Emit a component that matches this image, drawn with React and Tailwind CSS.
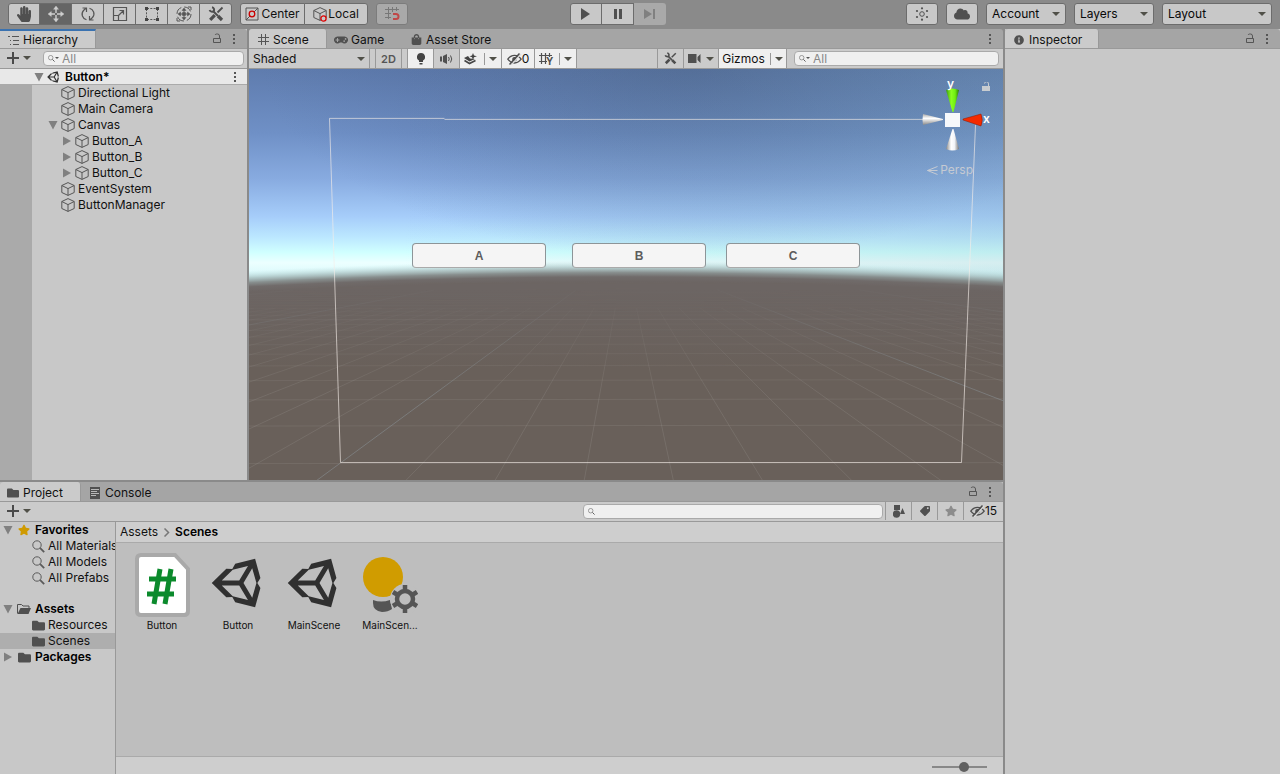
import { useState } from 'react'
import { FaHandPaper, FaFolder, FaStar, FaTag, FaGamepad, FaCloud, FaInfoCircle, FaShoppingBag } from 'react-icons/fa'

// --- SMALL ICONS ---

function Triangle({ open = false, className = '' }) {
  return (
    <svg viewBox="0 0 10 10" className={`w-[10px] h-[10px] shrink-0 fill-[#808080] ${className}`}>
      {open ? <path d="M0.5 1h9L5 9.5z" /> : <path d="M1 0.5v9L9 5z" />}
    </svg>
  )
}

function Caret() {
  return (
    <svg viewBox="0 0 8 4" className="w-2 h-1 shrink-0 fill-[#505048] pointer-events-none">
      <path d="M0 0h8L4 4z" />
    </svg>
  )
}

function Dots() {
  return (
    <svg viewBox="0 0 3 10" className="w-[3px] h-[10px] fill-[#555]">
      <path d="M0 0h2v2H0zM0 4h2v2H0zM0 8h2v2H0z" />
    </svg>
  )
}

function Lock() {
  return (
    <svg viewBox="0 0 10 11" className="w-[10px] h-[11px] fill-none stroke-[#555]">
      <path d="M1.5 5.5h7v4h-7zM7.5 5V3a2 2 0 0 0-2-2h-1a2 2 0 0 0-1.5 1" />
    </svg>
  )
}

function Plus() {
  return (
    <svg viewBox="0 0 12 12" className="w-3 h-3 stroke-[#4a4a4a]" strokeWidth="2">
      <path d="M6 0v12M0 6h12" />
    </svg>
  )
}

function Cube({ className = '' }) {
  return (
    <svg viewBox="0 0 14 14" className={`w-[14px] h-[14px] shrink-0 fill-none stroke-[#555] ${className}`} strokeLinejoin="round">
      <path d="M7 0.6l6.2 2.9v7L7 13.4l-6.2-2.9v-7zM0.8 3.5L7 6.6l6.2-3.1M7 6.6v6.8" />
    </svg>
  )
}

function UnityLogo({ className }) {
  return (
    <svg viewBox="8 8 496 496" className={`shrink-0 fill-[#303030] ${className}`}>
      <path d="M498.11 206.4L445.31 14.72 248.2 66.08 219 116.14l-59.2-.43L15.54 256 159.82 396.32l59.17-.43 29.24 50 197.08 51.36 52.8-191.62-30-49.63zM223.77 124.2L374.55 86.51 288 232.33H114.87zm0 263.63L114.87 279.71H288l86.55 145.81zm193 14L330.17 256l86.58-145.84L458.56 256z" />
    </svg>
  )
}

function Magnifier({ className = 'w-[13px] h-[13px]' }) {
  return (
    <svg viewBox="0 0 13 13" className={`shrink-0 fill-none stroke-[#5a5a5a] ${className}`}>
      <circle cx="5" cy="5" r="4.2" />
      <path d="M8.2 8.2l4 4" strokeWidth="1.8" />
    </svg>
  )
}

function Tools({ className = 'w-4 h-4' }) {
  return (
    <svg viewBox="0 0 16 16" className={`fill-none stroke-[#4d4d4d] ${className}`}>
      <path d="M5 5l5 5" strokeWidth="2" />
      <path d="M10 10l4 4" strokeWidth="3.2" />
      <path d="M1.6 4A2.6 2.6 0 0 0 5.8 5 2.6 2.6 0 0 0 4 1.2" strokeWidth="2" />
      <path d="M14.5 1.5l-5 5" strokeWidth="1.8" />
      <path d="M6.8 9.2l-4.6 4.6" strokeWidth="3.2" />
    </svg>
  )
}

function EyeOff() {
  return (
    <svg viewBox="0 0 15 12" className="w-[15px] h-3 shrink-0 fill-none stroke-[#4d4d4d]" strokeWidth="1.3">
      <path d="M0.8 6.2C3 3 5 2.4 7.5 2.4s4.5.8 6.7 3.8C12 9 10 10 7.5 10S3 9 .8 6.2z" />
      <circle cx="7.5" cy="6.2" r="1.6" fill="#4d4d4d" />
      <path d="M14 1L4 12" stroke="#dcdcdc" />
      <path d="M12.5 0.5l-10 11" strokeWidth="1.5" />
    </svg>
  )
}

function Hash() {
  return (
    <svg viewBox="0 0 11 11" className="w-[11px] h-[11px] stroke-[#555]">
      <path d="M3.5 0v11M7.5 0v11M0 3.5h11M0 7.5h11" />
    </svg>
  )
}

function GridAxis() {
  return (
    <svg viewBox="0 0 16 18" className="w-4 h-[18px] shrink-0">
      <path d="M2.5 3v11M6.5 3v11M10.5 3v4M0 5.5h13M0 11.5h8" stroke="#505050" strokeWidth="1.2" />
      <text x="7" y="15" fontSize="10" fontWeight="700" fill="#505050">Y</text>
    </svg>
  )
}

function HierarchyIcon() {
  return (
    <svg viewBox="0 0 11 10" className="w-[11px] h-[10px] stroke-[#555]">
      <path d="M0 1.5h2M4 1.5h7M2 5.5h1M5 5.5h6M2 9.5h1M5 9.5h6" />
    </svg>
  )
}

function FolderOpen() {
  return (
    <svg viewBox="0 0 14 12" className="w-[14px] h-3 shrink-0">
      <path d="M0.5 10.5v-9h4L6 3h6v2" fill="none" stroke="#505050" />
      <path d="M3.5 5H14l-2.5 6h-11z" fill="#505050" />
    </svg>
  )
}

function ConsoleIcon() {
  return (
    <svg viewBox="0 0 10 12" className="w-[10px] h-3">
      <path d="M0 0h10v12H0z" fill="#505050" />
      <path d="M1 2.5h8M1 4.5h6M1 6.5h8M1 8.5h5" stroke="#b8b8b8" />
    </svg>
  )
}

const TOOL_ICONS = {
  Move: (
    <svg viewBox="0 0 16 16" className="w-4 h-4 fill-[#d0d0d0] stroke-[#d0d0d0]">
      <path d="M8 3v4M8 9v4M3 8h4M9 8h4" strokeWidth="1.4" />
      <path d="M8 0l2.5 3.3h-5zM8 16l2.5-3.3h-5zM0 8l3.3-2.5v5zM16 8l-3.3-2.5v5z" strokeWidth="0.4" />
    </svg>
  ),
  Rotate: (
    <svg viewBox="0 0 16 16" className="w-4 h-4 fill-none stroke-[#555]" strokeWidth="1.2">
      <path d="M6.5 13.8C2.5 12.5.5 8 3.5 4.5L6.2 2M2.5 2h4v4M9.5 2.2c4 1.3 6 5.8 3 9.3L9.8 14M13.5 14h-4v-4" />
    </svg>
  ),
  Scale: (
    <svg viewBox="0 0 16 16" className="w-4 h-4 fill-none stroke-[#555]" strokeWidth="1.2">
      <path d="M1.5 1.5h13v13h-13zM1.5 9.5h5v5M6.5 9.5l5-5M7.5 4.5h4v4" />
    </svg>
  ),
  Rect: (
    <svg viewBox="0 0 16 16" className="w-4 h-4 fill-[#444]">
      <path d="M3 2.5h10M3 13.5h10M2.5 3v10M13.5 3v10" stroke="#555" strokeDasharray="2 1.3" />
      <path d="M1 1h3v3H1zM12 1h3v3h-3zM1 12h3v3H1zM12 12h3v3h-3z" />
    </svg>
  ),
  Transform: (
    <svg viewBox="0 0 16 16" className="w-4 h-4 fill-none stroke-[#555]">
      <circle cx="8" cy="8" r="7" strokeDasharray="8 3" />
      <path d="M8 3v10M3 8h10M12 1h3v3M1 12v3h3" />
      <path d="M8 2l2 2.5H6zM8 14l2-2.5H6zM2 8l2.5-2v4zM14 8l-2.5-2v4zM6.5 6.5h3v3h-3z" fill="#555" strokeWidth="0.5" />
    </svg>
  ),
}

// --- SHARED CONTROLS ---

function TopButton({ label, active, className = 'w-8', children, ...rest }) {
  return (
    <button
      aria-label={label}
      className={`h-[22px] flex items-center justify-center border border-[#6c6c6c] -ml-px first:ml-0 first:rounded-l-[3px] last:rounded-r-[3px] ${active ? 'bg-[#656565]' : 'bg-[#c8c8c8]'} ${className}`}
      {...rest}
    >
      {children}
    </button>
  )
}

function TopSelect({ label, className }) {
  return (
    <label className={`flex items-center h-[22px] pr-[5px] rounded-[3px] border border-[#6c6c6c] bg-[#c8c8c8] ${className}`}>
      <select aria-label={label} className="appearance-none flex-1 min-w-0 pl-[5px] outline-none text-[#090909]">
        <option>{label}</option>
      </select>
      <Caret />
    </label>
  )
}

function Tab({ active, focused, icon, className, children }) {
  return (
    <button
      className={`h-full flex items-center gap-1 text-[#111] ${active ? 'bg-[#cbcbcb] border-r border-[#999]' : ''} ${focused ? 'border-t-2 border-t-[#3a72b0]' : 'pt-[2px] rounded-t-[3px]'} ${className}`}
    >
      <span className="w-3 flex justify-center shrink-0">{icon}</span>
      {children}
    </button>
  )
}

function TabBar({ lock = true, children }) {
  return (
    <div className="h-5 shrink-0 flex items-center bg-[#a5a5a5] border-b border-[#999] rounded-t-[3px] pr-[11px]">
      {children}
      <div className="flex-1" />
      {lock && <button aria-label="Lock" className="mr-[11px]"><Lock /></button>}
      <button aria-label="Panel menu"><Dots /></button>
    </div>
  )
}

function SearchField({ label, placeholder, caret, className }) {
  return (
    <label className={`h-[15px] flex items-center px-1 rounded-[4px] border border-[#aaa] bg-[#f0f0f0] ${className}`}>
      <Magnifier className="w-[7px] h-[7px]" />
      {caret && <svg viewBox="0 0 4 3" className="w-1 h-[3px] fill-[#555]"><path d="M0 0h4L2 2z" /></svg>}
      <input aria-label={label} placeholder={placeholder} className="flex-1 min-w-0 ml-[3px] text-[12px] leading-[13px] outline-none placeholder:text-[#888]" />
    </label>
  )
}

function BarButton({ label, on, className, children }) {
  return (
    <button aria-label={label} className={`h-full flex items-center justify-center border-r border-[#999] shrink-0 ${on ? 'bg-[#efefef]' : ''} ${className}`}>
      {children}
    </button>
  )
}

function SplitCaret() {
  return (
    <span className="flex items-center gap-1">
      <i className="w-px h-3 bg-[#999]" />
      <Caret />
    </span>
  )
}

// --- TOP TOOLBAR ---

function TopToolbar() {
  const [tool, setTool] = useState('Move')
  return (
    <header className="h-[29px] shrink-0 flex items-center px-2 pb-px">
      <div className="flex">
        <TopButton label="Hand" active={tool === 'Hand'} onClick={() => setTool('Hand')}>
          <FaHandPaper className="w-4 h-4 text-[#505050]" />
        </TopButton>
        {Object.keys(TOOL_ICONS).map((name) => (
          <TopButton key={name} label={name} active={tool === name} className="w-[33px]" onClick={() => setTool(name)}>
            {TOOL_ICONS[name]}
          </TopButton>
        ))}
        <TopButton label="Custom tools" className="w-[33px]"><Tools /></TopButton>
      </div>

      <div className="flex ml-2">
        <TopButton className="w-[65px]">
          <svg viewBox="0 0 14 14" className="w-[14px] h-[14px] mr-[2px] shrink-0 fill-none">
            <path d="M1 1h12v12H1zM1 13L13 1" stroke="#555" />
            <circle cx="7" cy="7" r="2.8" fill="#c8c8c8" stroke="#c00" strokeWidth="1.3" />
          </svg>
          Center
        </TopButton>
        <TopButton className="w-16">
          <span className="relative mr-px">
            <Cube />
            <svg viewBox="0 0 7 7" className="absolute right-0 -bottom-px w-[7px] h-[7px]">
              <circle cx="3.5" cy="3.5" r="2.6" fill="#c8c8c8" stroke="#d00" strokeWidth="1.3" />
            </svg>
          </span>
          Local
        </TopButton>
      </div>

      <button aria-label="Grid snapping" disabled className="ml-2 w-8 h-[22px] flex items-center justify-center rounded-[3px] border border-[#7c7c7c] bg-[#a9a9a9]">
        <svg viewBox="0 0 15 14" className="w-[15px] h-[14px] fill-none">
          <path d="M3.5 0v12M7.5 0v5M11.5 0v4M0 2.5h14M0 6.5h6M0 10.5h6" stroke="#777" />
          <path d="M8 7h3a2.5 2.5 0 0 1 0 5H8" stroke="#c04848" strokeWidth="2" />
        </svg>
      </button>

      <div className="flex-[162]" />
      <div className="flex">
        <TopButton label="Play" className="w-8"><svg viewBox="0 0 9 12" className="w-[9px] h-3 fill-[#505050]"><path d="M0 0l9 6-9 6z" /></svg></TopButton>
        <TopButton label="Pause" className="w-[33px]"><svg viewBox="0 0 9 10" className="w-[9px] h-[10px] fill-[#505050]"><path d="M1 0h3v10H1zM6 0h3v10H6z" /></svg></TopButton>
        <button aria-label="Step" disabled className="w-8 h-[22px] flex items-center justify-center bg-[#a9a9a9] rounded-r-[3px]">
          <svg viewBox="0 0 11 10" className="w-[11px] h-[10px] fill-[#808080]"><path d="M0 0l8 5-8 5zM9 0h2v10H9z" /></svg>
        </button>
      </div>
      <div className="flex-[241]" />

      <div className="flex gap-2">
        <div>
          <TopButton label="Services">
            <svg viewBox="0 0 14 14" className="w-[14px] h-[14px] fill-[#505050]">
              <circle cx="7" cy="7" r="2.3" fill="none" stroke="#505050" />
              <circle cx="7" cy="1.3" r="1.1" />
              <circle cx="7" cy="12.7" r="1.1" />
              <circle cx="2" cy="4" r="1.1" />
              <circle cx="12" cy="4" r="1.1" />
              <circle cx="2" cy="10" r="1.1" />
              <circle cx="12" cy="10" r="1.1" />
            </svg>
          </TopButton>
        </div>
        <div><TopButton label="Cloud"><FaCloud className="w-4 h-4 text-[#505050]" /></TopButton></div>
        <TopSelect label="Account" className="w-20" />
        <TopSelect label="Layers" className="w-20" />
        <TopSelect label="Layout" className="w-[110px]" />
      </div>
    </header>
  )
}

// --- HIERARCHY ---

const NODES = [
  { name: 'Directional Light', depth: 0 },
  { name: 'Main Camera', depth: 0 },
  { name: 'Canvas', depth: 0, fold: 'open' },
  { name: 'Button_A', depth: 1, fold: 'closed' },
  { name: 'Button_B', depth: 1, fold: 'closed' },
  { name: 'Button_C', depth: 1, fold: 'closed' },
  { name: 'EventSystem', depth: 0 },
  { name: 'ButtonManager', depth: 0 },
]

function Hierarchy() {
  return (
    <section className="w-[247px] shrink-0 flex flex-col bg-[#c8c8c8]">
      <TabBar>
        <Tab active focused icon={<HierarchyIcon />} className="w-24 pl-[7px]">Hierarchy</Tab>
      </TabBar>
      <div className="h-5 shrink-0 flex items-center bg-[#cbcbcb] border-b border-[#999] pl-[7px] pr-[3px] pb-px">
        <button aria-label="Create object" className="shrink-0 flex items-center gap-1"><Plus /><Caret /></button>
        <SearchField label="Search hierarchy" placeholder="All" caret className="ml-3 flex-1 min-w-0" />
      </div>
      <div className="h-4 shrink-0 flex items-center bg-[#e8e8e8] border-b border-[#aaa] pl-[34px] pr-[10px]">
        <Triangle open />
        <UnityLogo className="w-3 h-3 ml-[3px] mr-[6px]" />
        <span className="font-semibold text-black flex-1">Button*</span>
        <button aria-label="Scene menu"><Dots /></button>
      </div>
      <div className="flex-1 flex">
        <div className="w-8 bg-[#aaa]" />
        <ul>
          {NODES.map((n) => (
            <li key={n.name} className={`h-4 flex items-center ${n.depth ? 'pl-[30px]' : 'pl-4'}`}>
              <span className="w-[13px]">{n.fold && <Triangle open={n.fold === 'open'} />}</span>
              <Cube className="mr-[3px]" />
              {n.name}
            </li>
          ))}
        </ul>
      </div>
    </section>
  )
}

// --- SCENE VIEW ---

// floor grid, one major line in every ten
const VP = { x: 376, y: 184 }
const rays = Array.from({ length: 61 }, (_, i) => i - 25)
const rungs = Array.from({ length: 36 }, (_, k) => ({ k, y: VP.y + 1 / (0.00476 + 0.00104 * k) }))

function SceneBackdrop() {
  return (
    <svg viewBox="0 -1 754 412" preserveAspectRatio="none" className="absolute inset-0 w-full h-full">
      <defs>
        <linearGradient id="sky" gradientUnits="userSpaceOnUse" x1="0" y1="0" x2="0" y2="210">
          <stop offset="0" stopColor="#5f7cae" />
          <stop offset="0.3" stopColor="#6f90c6" />
          <stop offset="0.52" stopColor="#88abe0" />
          <stop offset="0.7" stopColor="#a6cdfa" />
          <stop offset="0.8" stopColor="#bce8ff" />
          <stop offset="0.87" stopColor="#d0ffff" />
          <stop offset="0.92" stopColor="#ecffff" />
          <stop offset="1" stopColor="#d4f8fa" />
        </linearGradient>
        <radialGradient id="dusk" gradientUnits="userSpaceOnUse" cx="0" cy="0" r="1" gradientTransform="translate(440 -10) scale(430 200)">
          <stop offset="0" stopColor="#40537a" stopOpacity="0.5" />
          <stop offset="1" stopColor="#4a6596" stopOpacity="0" />
        </radialGradient>
        <linearGradient id="shade" x1="0" y1="0" x2="1" y2="0">
          <stop offset="0.2" stopColor="#7ca8b4" stopOpacity="0" />
          <stop offset="1" stopColor="#7ca8b4" stopOpacity="0.2" />
        </linearGradient>
        <radialGradient id="ground" gradientUnits="userSpaceOnUse" cx="377" cy="7291" r="7100">
          <stop offset="0.9970" stopColor="#6c6563" />
          <stop offset="0.9977" stopColor="#706b6a" />
          <stop offset="0.9983" stopColor="#7f8382" stopOpacity="0.9" />
          <stop offset="0.9990" stopColor="#a0b4b4" stopOpacity="0.65" />
          <stop offset="1" stopColor="#c0e4e4" stopOpacity="0" />
        </radialGradient>
        <linearGradient id="soil" gradientUnits="userSpaceOnUse" x1="0" y1="220" x2="0" y2="300">
          <stop offset="0" stopColor="#69605a" stopOpacity="0" />
          <stop offset="1" stopColor="#69605a" />
        </linearGradient>
        <linearGradient id="haze" gradientUnits="userSpaceOnUse" x1="0" y1="218" x2="0" y2="330">
          <stop offset="0" stopColor="#fff" stopOpacity="0.05" />
          <stop offset="1" stopColor="#fff" />
        </linearGradient>
        <mask id="fade" maskUnits="userSpaceOnUse" x="0" y="184" width="754" height="228">
          <rect y="184" width="754" height="228" fill="url(#haze)" />
        </mask>
      </defs>
      <rect y="-1" width="754" height="413" fill="url(#sky)" />
      <rect y="-1" width="754" height="210" fill="url(#dusk)" />
      <rect y="-1" width="754" height="226" fill="url(#shade)" />
      <rect y="180" width="754" height="232" fill="url(#ground)" />
      <rect y="220" width="754" height="192" fill="url(#soil)" />

      <g mask="url(#fade)" stroke="#a09c98" strokeWidth="0.8">
        {rays.map((i) => {
          const endX = 70 + i * 88.5
          const major = i % 10 === 0
          const from = major ? 0.16 : 0.24
          return (
            <line
              key={i}
              x1={VP.x + (endX - VP.x) * from}
              y1={VP.y + 228 * from}
              x2={endX + (endX - VP.x) * 0.01}
              y2="412"
              stroke={major ? '#8f9aa0' : undefined}
              strokeOpacity={major ? 0.6 : 0.3}
            />
          )
        })}
        {rungs.map(({ k, y }) => (
          <line key={k} x1="0" y1={y + 0.5} x2="754" y2={y - 0.5} strokeOpacity={k === 10 ? 0.5 : 0.25} />
        ))}
      </g>

      <path d="M80.5 48.5h115M195.5 49.5H675M726.5 55L712.5 393.5h-621L80.5 48.5" fill="none" stroke="#f4ede8" strokeOpacity="0.65" shapeRendering="crispEdges" />
    </svg>
  )
}

function OrientationGizmo() {
  return (
    <svg viewBox="0 0 72 80" className="w-[72px] h-20" aria-label="Orientation gizmo">
      <defs>
        <linearGradient id="coneV" x1="0" y1="0" x2="1" y2="0">
          <stop offset="0" stopColor="#888" />
          <stop offset="0.4" stopColor="#fff" />
          <stop offset="0.65" stopColor="#f2f4f8" />
          <stop offset="1" stopColor="#777" />
        </linearGradient>
        <linearGradient id="coneH" x1="0" y1="0" x2="0" y2="1">
          <stop offset="0" stopColor="#aaa" />
          <stop offset="0.4" stopColor="#fff" />
          <stop offset="1" stopColor="#888" />
        </linearGradient>
        <linearGradient id="coneG" x1="0" y1="0" x2="1" y2="0">
          <stop offset="0" stopColor="#3a9a10" />
          <stop offset="0.4" stopColor="#8bff20" />
          <stop offset="0.7" stopColor="#70f010" />
          <stop offset="1" stopColor="#2c7a08" />
        </linearGradient>
      </defs>
      <path d="M24 14q6.5-3 13 0L31.5 36h-1z" fill="url(#coneG)" />
      <path d="M1 38q-1 6 0 11L21 44v-1z" fill="url(#coneH)" />
      <path d="M59 38q2.5 6 0 12L41 44v-1z" fill="#f42a00" stroke="#8a1800" strokeWidth="0.5" />
      <path d="M24 73q6.5 3 13 0L31.5 53h-1z" fill="url(#coneV)" />
      <path d="M23 37h15v14H23z" fill="#f6f8fb" />
      <text x="25" y="12" fontSize="12" fontWeight="600" fill="#fff">y</text>
      <text x="61" y="47" fontSize="12" fontWeight="600" fill="#fff">x</text>
    </svg>
  )
}

function CanvasButton({ className, children }) {
  return (
    <button className={`absolute top-[174px] w-[134px] h-[25px] rounded-[4px] border border-[#8d9598] border-b-[#aaa] bg-[#f5f5f5] font-['Liberation_Sans',sans-serif] text-[12px] font-bold text-[#5c5c5c] ${className}`}>
      {children}
    </button>
  )
}

function SceneToolbar() {
  return (
    <div className="h-5 shrink-0 flex items-center bg-[#cbcbcb] border-b border-[#999]">
      <label className="h-full w-[121px] flex items-center px-1 border-r border-[#999]">
        <select aria-label="Draw mode" className="appearance-none flex-1 min-w-0 outline-none"><option>Shaded</option></select>
        <Caret />
      </label>
      <span className="h-full w-[6px] border-r border-[#999]" />
      <BarButton className="w-[26px] text-[11px] font-semibold text-[#555]">2D</BarButton>
      <span className="h-full w-[6px] border-r border-[#999]" />
      <BarButton label="Lighting" on className="w-[26px]">
        <svg viewBox="0 0 8 12" className="w-2 h-3 fill-[#444]"><path d="M4 0a4 4 0 0 0-2 7.5V9h4V7.5A4 4 0 0 0 4 0zM2.5 10h3v1.5h-3z" /></svg>
      </BarButton>
      <BarButton label="Audio" className="w-[26px]">
        <svg viewBox="0 0 13 10" className="w-[13px] h-[10px] fill-[#505050]">
          <path d="M0 2.5h2v5H0zM3 2l4-2v10L3 8z" />
          <path d="M8.5 3q1.5 2 0 4M10.5 1.5q2.5 3.5 0 7" fill="none" stroke="#505050" />
        </svg>
      </BarButton>
      <BarButton label="Effects" on className="w-[42px] gap-[7px]">
        <svg viewBox="0 0 13 12" className="w-[13px] h-3 fill-[#444]">
          <path d="M0 5l4-2 2 2.5 5 .5-5.5 2.5z" />
          <path d="M0.5 7.5l5 3 6-3" fill="none" stroke="#444" strokeWidth="1.6" />
          <path d="M9 0l1 2.5 3 .8-3 .9L9 7 8 4.2l-2.5-.9L8 2.5z" />
        </svg>
        <SplitCaret />
      </BarButton>
      <BarButton label="Hidden objects" on className="w-[33px]"><EyeOff /><span>0</span></BarButton>
      <BarButton label="Grid" on className="w-[42px] gap-1"><GridAxis /><SplitCaret /></BarButton>
      <div className="flex-1 h-full border-r border-[#999]" />
      <BarButton label="Component tools" className="w-[26px]"><Tools className="w-[13px] h-[13px]" /></BarButton>
      <BarButton label="Scene camera" className="w-[35px] gap-[5px]">
        <svg viewBox="0 0 13 9" className="w-[13px] h-[9px] fill-[#505050]"><path d="M0 0h8.5v9H0zM9.5 3l3-3v9l-3-3z" /></svg>
        <Caret />
      </BarButton>
      <BarButton on className="w-[68px] gap-[5px]">Gizmos<SplitCaret /></BarButton>
      <SearchField label="Search scene" placeholder="All" caret className="w-[205px] ml-[7px] mr-1" />
    </div>
  )
}

function SceneView() {
  return (
    <section className="flex-1 min-w-0 flex flex-col">
      <TabBar lock={false}>
        <Tab active icon={<Hash />} className="w-[78px] pl-2">Scene</Tab>
        <Tab icon={<FaGamepad className="w-[14px] h-[14px] shrink-0 text-[#505050]" />} className="w-[77px] pl-2">Game</Tab>
        <Tab icon={<FaShoppingBag className="w-[11px] h-[11px] text-[#505050]" />} className="pl-[6px]">Asset Store</Tab>
      </TabBar>
      <SceneToolbar />
      <div className="flex-1 relative overflow-hidden">
        <SceneBackdrop />
        <CanvasButton className="left-[163px]">A</CanvasButton>
        <CanvasButton className="left-[323px]">B</CanvasButton>
        <CanvasButton className="left-[477px]">C</CanvasButton>
        <div className="absolute right-[9px] top-[7px]"><OrientationGizmo /></div>
        <svg viewBox="0 0 8 9" className="absolute right-[13px] top-[13px] w-2 h-[9px]">
          <path d="M0 4h8v5H0z" fill="#c8ccd0" />
          <path d="M6.5 4V2a2 2 0 0 0-4-.5" fill="none" stroke="#c8ccd0" />
        </svg>
        <button className="absolute right-[30px] top-[93px] flex items-center gap-[2px] text-[#c5cad2]">
          <svg viewBox="0 0 11 9" className="w-[11px] h-[9px] fill-none stroke-[#c5cad2]"><path d="M10.5 0.5l-10 4 10 4M0.5 4.5h10" /></svg>
          Persp
        </button>
      </div>
    </section>
  )
}

// --- PROJECT ---

function TreeRow({ depth = 0, open, icon, bold, selected, children }) {
  return (
    <li className={`h-4 flex items-center gap-[3px] whitespace-nowrap ${depth ? 'pl-[31px]' : 'pl-[3px]'} ${bold ? 'font-semibold text-black' : ''} ${selected ? 'bg-[#aeaeae]' : ''}`}>
      {!depth && <Triangle open={open} />}
      <span className={`flex justify-center shrink-0 ${depth ? 'w-[14px]' : 'w-4'}`}>{icon}</span>
      {children}
    </li>
  )
}

const folder = <FaFolder className="w-[13px] h-[13px] text-[#505050]" />

function Asset({ name, children }) {
  return (
    <li className="w-[76px] flex flex-col items-center">
      <div className="h-16 flex items-center justify-center">{children}</div>
      <span className="mt-[2px] text-[10px] leading-[13px]">{name}</span>
    </li>
  )
}

function Project() {
  return (
    <section className="flex-[292] min-h-0 flex flex-col bg-[#bebebe]">
      <TabBar>
        <Tab active icon={<FaFolder className="w-3 h-3 text-[#505050]" />} className="w-[81px] pl-[7px]">Project</Tab>
        <Tab icon={<ConsoleIcon />} className="pl-2">Console</Tab>
      </TabBar>
      <div className="h-5 shrink-0 flex items-center bg-[#cbcbcb] border-b border-[#999] pl-[7px] pb-px">
        <button aria-label="Create asset" className="flex items-center gap-1"><Plus /><Caret /></button>
        <div className="flex-1" />
        <SearchField label="Search assets" className="w-[300px] mr-[2px]" />
        <span className="h-full border-r border-[#999]" />
        <BarButton label="Search by type" className="w-[26px]">
          <svg viewBox="0 0 12 13" className="w-3 h-[13px] fill-[#505050]"><path d="M1 0h6v5H1zM9.5 3L12 9H7z" /><circle cx="3.5" cy="9" r="3.7" /></svg>
        </BarButton>
        <BarButton label="Search by label" className="w-[26px]"><FaTag className="w-[10px] h-[10px] -scale-x-100 text-[#505050]" /></BarButton>
        <BarButton label="Save search" className="w-[26px]"><FaStar className="w-3 h-3 text-[#8c8c8c]" /></BarButton>
        <button aria-label="Hidden packages" className="h-full w-[39px] flex items-center justify-center"><EyeOff />15</button>
      </div>

      <div className="flex-1 min-h-0 flex">
        <nav className="w-[116px] shrink-0 overflow-hidden bg-[#c8c8c8] border-r border-[#999]">
          <ul>
            <TreeRow open bold icon={<FaStar className="w-3 h-3 text-[#cf9a00]" />}>Favorites</TreeRow>
            <TreeRow depth={1} icon={<Magnifier />}>All Materials</TreeRow>
            <TreeRow depth={1} icon={<Magnifier />}>All Models</TreeRow>
            <TreeRow depth={1} icon={<Magnifier />}>All Prefabs</TreeRow>
          </ul>
          <ul className="mt-[15px]">
            <TreeRow open bold icon={<FolderOpen />}>Assets</TreeRow>
            <TreeRow depth={1} icon={folder}>Resources</TreeRow>
            <TreeRow depth={1} icon={folder} selected>Scenes</TreeRow>
            <TreeRow bold icon={folder}>Packages</TreeRow>
          </ul>
        </nav>

        <div className="flex-1 flex flex-col">
          <div className="h-[21px] flex items-center gap-[5px] pl-1 bg-[#cecece] border-b border-[#aaa]">
            <span>Assets</span>
            <svg viewBox="0 0 7 9" className="w-[7px] h-[9px] fill-none stroke-[#777]" strokeWidth="1.5"><path d="M1.5 0.500l4 4-4 4" /></svg>
            <span className="font-semibold text-black">Scenes</span>
          </div>

          <ul className="flex-1 flex flex-wrap content-start pt-[10px] pl-2">
            <Asset name="Button">
              <svg viewBox="0 0 56 64" className="w-14 h-16">
                <path d="M7 2h34l13 14v42q0 4-4 4H7q-4 0-4-4V6q0-4 4-4z" fill="#fff" stroke="#a9a9a9" strokeWidth="4" />
                <path d="M26 16l-6 35M37 16l-6 35M15 26h27M13 41h27" stroke="#0b8a2c" strokeWidth="5" />
              </svg>
            </Asset>
            <Asset name="Button"><UnityLogo className="w-[50px] h-[50px] mr-1 mb-1" /></Asset>
            <Asset name="MainScene"><UnityLogo className="w-[50px] h-[50px] mr-1 mb-1" /></Asset>
            <Asset name="MainScen...">
              <svg viewBox="0 0 56 64" className="w-14 h-16">
                <circle cx="21" cy="24" r="20" fill="#d09c00" />
                <path d="M11 47q8 3 17 0l2 9q-4 3-10 3-9-1-9-9z" fill="#555" />
                <circle cx="43" cy="46" r="15" fill="#bebebe" />
                <circle cx="43" cy="46" r="8" fill="none" stroke="#555" strokeWidth="4.5" />
                <path d="M43 32v5M43 55v5M31 39l4 2.5M55 39l-4 2.5M31 53l4-2.5M55 53l-4-2.5" stroke="#555" strokeWidth="4.5" />
              </svg>
            </Asset>
          </ul>

          <div className="h-[18px] flex items-center justify-end pr-4 pt-[3px] bg-[#cecece] border-t border-[#aaa]">
            <input
              type="range"
              aria-label="Icon size"
              defaultValue="60"
              className="w-[55px] h-[10px] appearance-none bg-[linear-gradient(#888,#888)] bg-[length:100%_2px] bg-center bg-no-repeat [&::-webkit-slider-thumb]:appearance-none [&::-webkit-slider-thumb]:w-[10px] [&::-webkit-slider-thumb]:h-[10px] [&::-webkit-slider-thumb]:rounded-full [&::-webkit-slider-thumb]:bg-[#606060]"
            />
          </div>
        </div>
      </div>
    </section>
  )
}

export default function App() {
  return (
    <div className="h-screen flex flex-col overflow-hidden bg-[#8a8a8a] font-['Inter',sans-serif] text-[12px] leading-4 text-[#111]">
      <TopToolbar />
      <main className="flex-1 min-h-0 flex gap-[2px]">
        <div className="flex-1 min-w-0 flex flex-col gap-[2px]">
          <div className="flex-[451] min-h-0 flex gap-[2px]">
            <Hierarchy />
            <SceneView />
          </div>
          <Project />
        </div>
        <aside className="w-[275px] shrink-0 bg-[#c8c8c8]">
          <TabBar>
            <Tab active icon={<FaInfoCircle className="w-[10px] h-[10px] text-[#505050]" />} className="w-[94px] pl-2">Inspector</Tab>
          </TabBar>
        </aside>
      </main>
    </div>
  )
}
